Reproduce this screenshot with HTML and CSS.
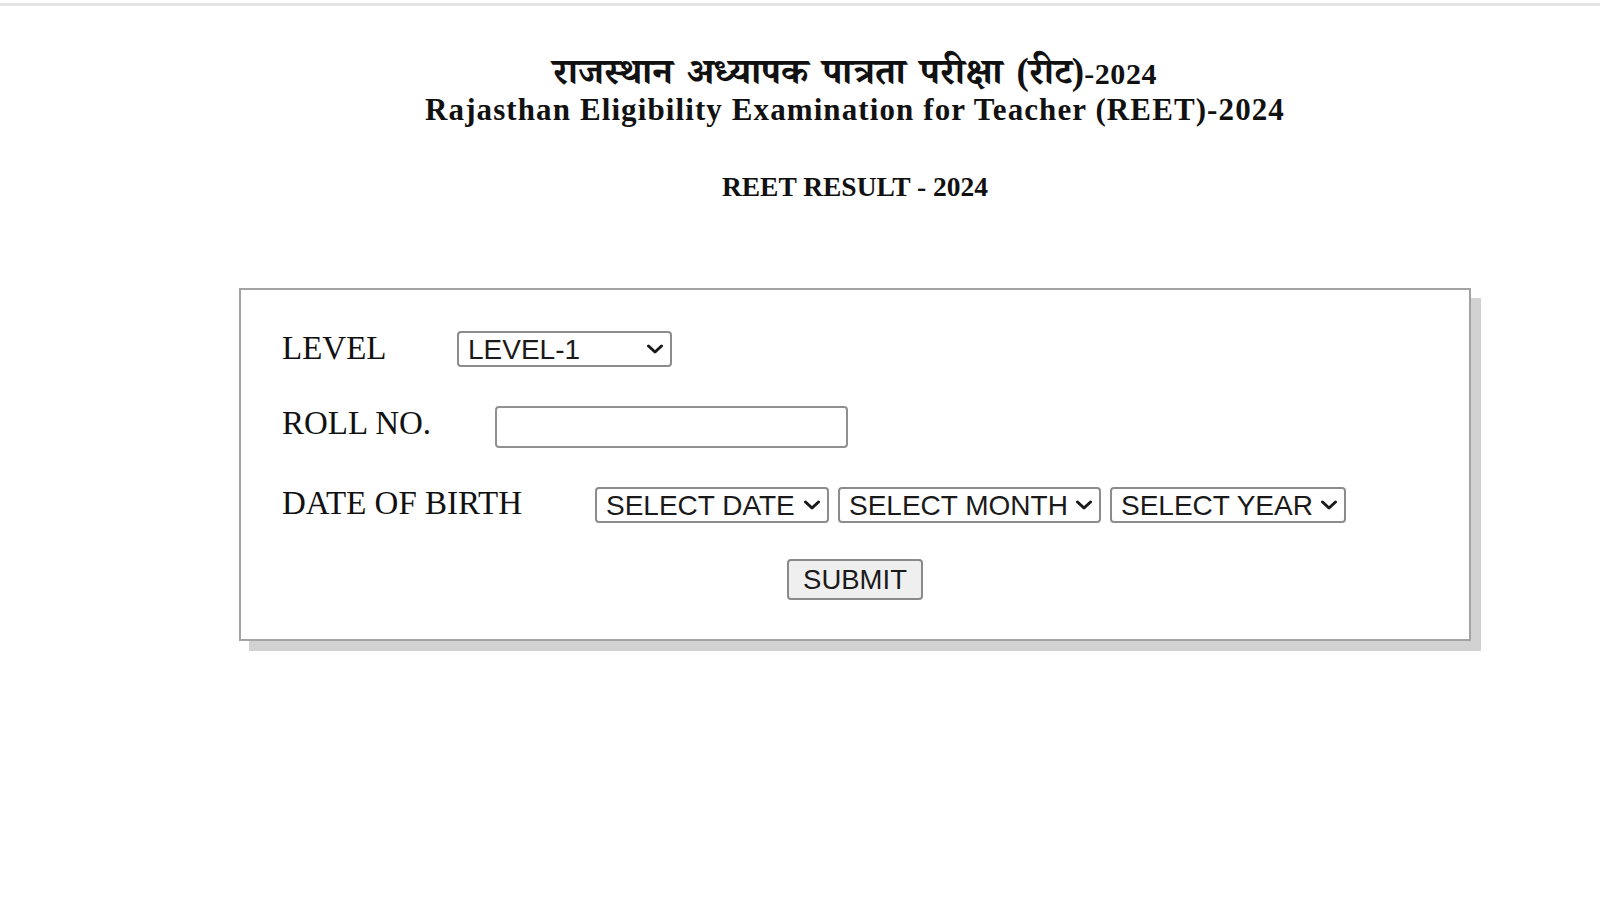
FILE: index.html
```html
<!DOCTYPE html>
<html lang="hi">
<head>
<meta charset="utf-8">
<title>REET RESULT - 2024</title>
<link rel="stylesheet" href="styles.css">
</head>
<body>
<div class="topbar"></div>
<main class="page">
  <header class="titles">
    <h1 class="title-hi"><span class="deva">राजस्थान अध्यापक पात्रता परीक्षा (रीट)</span>-2024</h1>
    <h2 class="title-en">Rajasthan Eligibility Examination for Teacher (REET)-2024</h2>
    <h3 class="title-result">REET RESULT - 2024</h3>
  </header>

  <form class="card" onsubmit="return false;">
    <div class="row">
      <label class="label lab-level" for="level">LEVEL</label>
      <span class="sel-wrap">
        <select id="level" class="sel sel-level">
          <option>LEVEL-1</option>
          <option>LEVEL-2</option>
        </select>
        <svg class="chev" viewBox="0 0 18 10" width="18" height="10" aria-hidden="true"><path d="M2.5 2 L9 8 L15.5 2" fill="none" stroke="#1a1a1a" stroke-width="3" stroke-linecap="round" stroke-linejoin="round"/></svg>
      </span>
    </div>

    <div class="row">
      <label class="label lab-roll" for="roll">ROLL NO.</label>
      <input id="roll" class="roll" type="text">
    </div>

    <div class="row">
      <label class="label lab-dob" for="dd">DATE OF BIRTH</label>
      <div class="dob">
        <span class="sel-wrap">
          <select id="dd" class="sel sel-date"><option>SELECT DATE</option></select>
          <svg class="chev" viewBox="0 0 18 10" width="18" height="10" aria-hidden="true"><path d="M2.5 2 L9 8 L15.5 2" fill="none" stroke="#1a1a1a" stroke-width="3" stroke-linecap="round" stroke-linejoin="round"/></svg>
        </span>
        <span class="sel-wrap">
          <select class="sel sel-month"><option>SELECT MONTH</option></select>
          <svg class="chev" viewBox="0 0 18 10" width="18" height="10" aria-hidden="true"><path d="M2.5 2 L9 8 L15.5 2" fill="none" stroke="#1a1a1a" stroke-width="3" stroke-linecap="round" stroke-linejoin="round"/></svg>
        </span>
        <span class="sel-wrap">
          <select class="sel sel-year"><option>SELECT YEAR</option></select>
          <svg class="chev" viewBox="0 0 18 10" width="18" height="10" aria-hidden="true"><path d="M2.5 2 L9 8 L15.5 2" fill="none" stroke="#1a1a1a" stroke-width="3" stroke-linecap="round" stroke-linejoin="round"/></svg>
        </span>
      </div>
    </div>

    <div class="row-submit">
      <button class="submit" type="submit">SUBMIT</button>
    </div>
  </form>
</main>
</body>
</html>
```

FILE: styles.css
```css
html, body {
  margin: 0;
  padding: 0;
  background: #ffffff;
}

body {
  font-family: "Liberation Serif", "Times New Roman", "Noto Serif Devanagari", "Noto Sans Devanagari", "Lohit Devanagari", FreeSerif, serif;
  color: #111111;
}

.topbar {
  margin-top: 3px;
  height: 3px;
  background: #e4e4e4;
}

.page {
  padding-left: 110px;
  padding-bottom: 60px;
}

.titles {
  text-align: center;
}

.title-hi {
  margin: 50px 0 0;
  font-size: 30px;
  line-height: 36px;
  font-weight: bold;
  letter-spacing: 0.6px;
}

.deva {
  font-size: 37px;
  line-height: 30px;
  letter-spacing: 0;
  word-spacing: 5px;
}

.title-en {
  margin: 0;
  font-size: 31px;
  line-height: 36px;
  font-weight: bold;
  letter-spacing: 1.1px;
}

.title-result {
  margin: 43px 0 0;
  font-size: 27.5px;
  line-height: 32px;
  font-weight: bold;
}

.card {
  box-sizing: border-box;
  width: 1232px;
  margin: 85px auto 0;
  padding: 38px 41px 39px;
  border: 2px solid #a3a3a3;
  background: #ffffff;
  box-shadow: 10px 10px 0 #d2d2d2;
}

.row {
  display: flex;
  align-items: center;
  height: 42px;
  margin-bottom: 36px;
}

.label {
  flex: none;
  font-size: 33px;
  line-height: 38px;
  color: #111111;
}

.lab-level { width: 175px; margin-bottom: 2px; }
.lab-roll { width: 213px; margin-bottom: 8px; }
.lab-dob { width: 313px; margin-bottom: 4px; }

.sel-wrap {
  position: relative;
  display: inline-block;
  flex: none;
}

.sel {
  display: block;
  box-sizing: border-box;
  height: 36px;
  margin: 0;
  padding: 0 30px 0 9px;
  border: 2px solid #8c8c8c;
  border-radius: 4px;
  background: #ffffff;
  font-family: "Liberation Sans", Arial, sans-serif;
  font-size: 28px;
  color: #1a1a1a;
  -webkit-appearance: none;
  appearance: none;
}

.chev {
  position: absolute;
  right: 8px;
  top: 13px;
  pointer-events: none;
}

.sel-level { width: 215px; }
.sel-date { width: 234px; }
.sel-month { width: 263px; }
.sel-year { width: 236px; }

.dob {
  display: flex;
  gap: 9px;
}

.roll {
  box-sizing: border-box;
  width: 353px;
  height: 42px;
  margin: 0;
  padding: 0 8px;
  border: 2px solid #909090;
  border-radius: 4px;
  background: #ffffff;
  font-family: "Liberation Sans", Arial, sans-serif;
  font-size: 27px;
}

.row-submit {
  display: flex;
  justify-content: center;
  margin-top: -3px;
}

.submit {
  box-sizing: border-box;
  width: 136px;
  height: 41px;
  margin: 0;
  padding: 0;
  border: 2px solid #8a8a8a;
  border-radius: 4px;
  background: #efefef;
  font-family: "Liberation Sans", Arial, sans-serif;
  font-size: 27.5px;
  color: #1a1a1a;
}
```
